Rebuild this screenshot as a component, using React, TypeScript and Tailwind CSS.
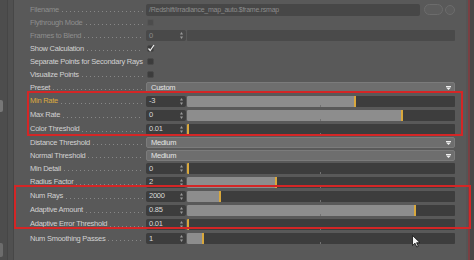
import React from "react";

function Label({ text, dim, hi }: { text: string; dim?: boolean; hi?: boolean }) {
  return (
    <div className="w-[116px] flex items-center whitespace-nowrap pr-[3px]">
      <span className={hi ? "text-[#dcaa3e]" : dim ? "text-[#8e8e8e]" : "text-[#d2d2d2]"}>{text}</span>
      <div className="flex-1 h-[1px] mt-[4px] ml-[3px] bg-[linear-gradient(to_right,#878787_1px,transparent_1px)] bg-[length:4px_1px] bg-repeat-x" />
    </div>
  );
}

function Spin() {
  return (
    <svg width="3" height="7" viewBox="0 0 3 7" className="shrink-0">
      <path d="M1.5 0 L3 2.5 L0 2.5 Z" fill="#9a9a9a" />
      <path d="M1.5 7 L3 4.5 L0 4.5 Z" fill="#9a9a9a" />
    </svg>
  );
}

function NumField({ v, dim }: { v: string; dim?: boolean }) {
  return (
    <div className={`w-[40px] h-[11px] rounded-[2px] flex items-center justify-between pl-[3px] pr-[3px] shrink-0 ${dim ? "bg-[#494949] text-[#8a8a8a]" : "bg-[#3d3d3d] text-[#dadada]"}`}>
      <span>{v}</span>
      <Spin />
    </div>
  );
}

function Slider({ v, fill }: { v: string; fill: number }) {
  return (
    <div className="flex items-center w-full">
      <NumField v={v} />
      <div className="relative ml-[1px] flex-1 h-[11px] bg-[#3d3d3d] rounded-[1px] overflow-hidden">
        <div className="absolute left-0 top-0 bottom-0 bg-[#8d8d8d]" style={{ width: fill }} />
        <div className="absolute top-0 bottom-0 w-[2px] bg-[#d9a83c]" style={{ left: fill }} />
        <div className="absolute left-[133px] bottom-0 w-px h-[2px] bg-[#727272]" />
      </div>
    </div>
  );
}

function Dropdown({ v }: { v: string }) {
  return (
    <div className="w-full h-[11px] bg-[#6e6e6e] border border-[#7b7b7b] rounded-[2px] flex items-center justify-between pl-[4px] pr-[3px] text-[#e4e4e4]">
      <span>{v}</span>
      <svg width="5" height="4" viewBox="0 0 5 4">
        <rect x="0" y="0" width="5" height="1" fill="#f0f0f0" />
        <path d="M0 1.5 L5 1.5 L2.5 4 Z" fill="#f0f0f0" />
      </svg>
    </div>
  );
}

function Check({ on, dim }: { on?: boolean; dim?: boolean }) {
  return (
    <div className={`relative w-[7px] h-[7px] rounded-[2px] ml-[1px] ${dim ? "bg-[#4c4c4c] border border-[#555]" : "bg-[#3c3c3c] border border-[#4a4a4a]"}`}>
      {on && (
        <svg width="8" height="8" viewBox="0 0 8 8" className="absolute -left-[1px] -top-[2px]">
          <path d="M1.5 4.5 L3.2 6.5 L7 1" stroke="#f2f2f2" strokeWidth="1.2" fill="none" />
        </svg>
      )}
    </div>
  );
}

function Row({ label, dim, hi, h = "h-[13px]", children }: { label: string; dim?: boolean; hi?: boolean; h?: string; children: React.ReactNode }) {
  return (
    <div className={`flex items-center ${h}`}>
      <Label text={label} dim={dim} hi={hi} />
      <div className="w-[309px] flex items-center">{children}</div>
    </div>
  );
}

export default function App() {
  return (
    <div className="relative w-[474px] h-[260px] overflow-hidden bg-[#595959] flex font-['Liberation_Sans',Arial,sans-serif] text-[7.5px] tracking-[-0.25px] leading-none">
      {/* left strip */}
      <div className="relative w-[14px] h-full bg-[#505050] border-r border-[#474747] flex">
        <div className="w-[8px] h-full bg-[#4d4d4d] border-r border-[#464646]" />
        <div className="absolute left-0 top-[100px] w-[3px] h-[12px] rounded-r-[2px] bg-[#777]" />
        <div className="absolute left-0 top-[243px] w-[3px] h-[14px] rounded-r-[2px] bg-[#6c6c6c]" />
      </div>

      {/* main */}
      <div className="flex-1 flex flex-col pt-[3px] pl-[16px]">
        <Row label="Filename" dim>
          <div className="flex-1 h-[12px] bg-[#474747] rounded-[2px] flex items-center pl-[3px] text-[#8c8c8c] text-[7px] whitespace-nowrap">
            /Redshift/irradiance_map_auto.$frame.rsmap
          </div>
          <div className="ml-[4px] w-[19px] h-[11px] rounded-full border border-[#6c6c6c] bg-[#5d5d5d]" />
          <div className="ml-[2px] w-[10px] h-[10px] rounded-full border border-[#6c6c6c] bg-[#5d5d5d]" />
        </Row>
        <Row label="Flythrough Mode" dim>
          <Check dim />
        </Row>
        <Row label="Frames to Blend" dim>
          <NumField v="0" dim />
          <div className="ml-[1px] flex-1 h-[11px] bg-[#4a4a4a] rounded-[1px]" />
        </Row>
        <Row label="Show Calculation">
          <Check on />
        </Row>
        <Row label="Separate Points for Secondary Rays">
          <Check />
        </Row>
        <Row label="Visualize Points">
          <Check />
        </Row>
        <Row label="Preset">
          <Dropdown v="Custom" />
        </Row>
        <Row label="Min Rate" hi h="h-[14px]">
          <Slider v="-3" fill={167} />
        </Row>
        <Row label="Max Rate" h="h-[14px]">
          <Slider v="0" fill={214} />
        </Row>
        <Row label="Color Threshold" h="h-[14px]">
          <Slider v="0.01" fill={0} />
        </Row>
        <Row label="Distance Threshold">
          <Dropdown v="Medium" />
        </Row>
        <Row label="Normal Threshold">
          <Dropdown v="Medium" />
        </Row>
        <Row label="Min Detail">
          <Slider v="0" fill={0} />
        </Row>
        <Row label="Radius Factor" h="h-[14px]">
          <Slider v="2" fill={88} />
        </Row>
        <Row label="Num Rays" h="h-[14px]">
          <Slider v="2000" fill={32} />
        </Row>
        <Row label="Adaptive Amount" h="h-[14px]">
          <Slider v="0.85" fill={227} />
        </Row>
        <Row label="Adaptive Error Threshold" h="h-[14px]">
          <Slider v="0.01" fill={0} />
        </Row>
        <Row label="Num Smoothing Passes" h="h-[15px]">
          <Slider v="1" fill={15} />
        </Row>
      </div>

      {/* right strip */}
      <div className="w-[8px] h-full flex">
        <div className="w-[2px] h-full bg-[#555]" />
        <div className="w-[2px] h-full bg-[#7a3f42]" />
        <div className="flex-1 h-full bg-[#474747]" />
      </div>

      {/* red highlight boxes */}
      <div className="absolute left-[27px] top-[91px] w-[436px] h-[45px] border-2 border-[#d42626] pointer-events-none" />
      <div className="absolute left-[14px] top-[185px] w-[457px] h-[44px] border-2 border-[#d42626] pointer-events-none" />

      {/* mouse cursor */}
      <svg width="9" height="13" viewBox="0 0 9 13" className="absolute left-[412px] top-[235px]">
        <path d="M0.5 0.5 L0.5 10.5 L3 8.2 L4.8 12 L6.3 11.3 L4.6 7.7 L8 7.7 Z" fill="#f4f4f4" stroke="#111" strokeWidth="0.8" />
      </svg>
    </div>
  );
}
